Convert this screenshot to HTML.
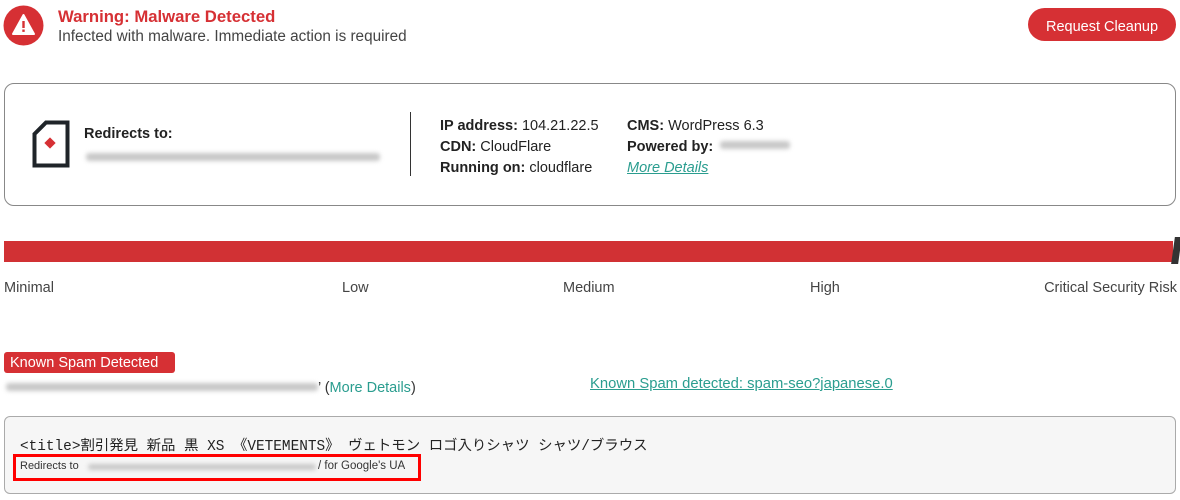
<!DOCTYPE html>
<html><head><meta charset="utf-8"><style>
*{margin:0;padding:0;box-sizing:border-box}
body{width:1180px;height:500px;background:#fff;font-family:"Liberation Sans","Noto Sans CJK JP",sans-serif;color:#333;position:relative;overflow:hidden;font-size:14.5px}
.a{position:absolute;white-space:nowrap}
.blur{background:#c8c8c8;filter:blur(2px);height:8px;border-radius:3px;position:absolute}
.teal{color:#2a9d8f}
</style></head><body>
<svg class="a" style="left:3px;top:5px" width="41" height="41" viewBox="0 0 41 41"><circle cx="20.5" cy="20.5" r="20" fill="#d63034"/><path d="M20.5 10 L31 29 H10 Z" fill="#fff" stroke="#fff" stroke-width="2" stroke-linejoin="round"/><rect x="19.3" y="16" width="2.4" height="7" fill="#d63034"/><rect x="19.3" y="24.5" width="2.4" height="2.4" fill="#d63034"/></svg>
<div class="a" style="left:58px;top:7px;font-size:16.7px;font-weight:bold;color:#d63034">Warning: Malware Detected</div>
<div class="a" style="left:58px;top:28px;font-size:15.3px;color:#444">Infected with malware. Immediate action is required</div>
<div class="a" style="left:1028px;top:8px;width:148px;height:33px;border-radius:17px;background:#d63034;color:#fff;font-size:14.5px;text-align:center;line-height:33px;padding-top:3px">Request Cleanup</div>

<div class="a" style="left:4px;top:83px;width:1172px;height:123px;border:1px solid #888;border-radius:10px"></div>
<svg class="a" style="left:32px;top:120px" width="38" height="48" viewBox="0 0 38 48"><path d="M2.5 14 L14 2.5 H35.5 V45.5 H2.5 Z" fill="none" stroke="#1f2429" stroke-width="4"/><rect x="14" y="19" width="8" height="8" fill="#d63034" transform="rotate(45 18 23)"/></svg>
<div class="a" style="left:84px;top:126px;font-weight:bold;color:#222">Redirects to:</div>
<div class="blur" style="left:86px;top:153px;width:294px"></div>
<div class="a" style="left:440px;top:116px;line-height:21px;color:#222"><b>IP address:</b> 104.21.22.5<br><b>CDN:</b> CloudFlare<br><b>Running on:</b> cloudflare</div>
<div class="a" style="left:410px;top:112px;width:1px;height:64px;background:#333"></div>
<div class="a" style="left:627px;top:116px;line-height:21px;color:#222"><b>CMS:</b> WordPress 6.3<br><b>Powered by:</b><br><i class="teal" style="text-decoration:underline">More Details</i></div>
<div class="blur" style="left:720px;top:141px;width:70px"></div>

<div class="a" style="left:4px;top:241px;width:1169px;height:21px;background:#d13134"></div>
<div class="a" style="left:1173px;top:237px;width:7px;height:27px;background:#333;transform:skewX(-8deg)"></div>
<div class="a" style="left:4px;top:280px;color:#444">Minimal</div>
<div class="a" style="left:342px;top:280px;color:#444">Low</div>
<div class="a" style="left:563px;top:280px;color:#444">Medium</div>
<div class="a" style="left:810px;top:280px;color:#444">High</div>
<div class="a" style="right:3px;top:280px;color:#444">Critical Security Risk</div>

<div class="a" style="left:4px;top:352px;width:171px;height:21px;background:#d63034;color:#fff;border-radius:3px;line-height:21px;padding-left:6px;padding-top:1px">Known Spam Detected</div>
<div class="blur" style="left:6px;top:383px;width:312px"></div>
<div class="a" style="left:318px;top:380px;color:#333">’ (<span class="teal">More Details</span>)</div>
<div class="a teal" style="left:590px;top:376px;text-decoration:underline;font-size:14.8px">Known Spam detected: spam-seo?japanese.0</div>

<div class="a" style="left:4px;top:416px;width:1172px;height:78px;background:#f6f6f6;border:1px solid #aaa;border-radius:6px"></div>
<div class="a" style="left:20px;top:434px;font-family:'Liberation Mono','Noto Sans CJK JP',monospace;font-size:14.4px;color:#222">&lt;title&gt;割引発見 新品 黒 XS 《VETEMENTS》 ヴェトモン ロゴ入りシャツ シャツ/ブラウス</div>
<div class="a" style="left:13px;top:454px;width:408px;height:27px;border:3px solid #f00"></div>
<div class="a" style="left:20px;top:460px;font-size:11px;color:#333">Redirects to</div>
<div class="blur" style="left:88px;top:464px;width:228px;height:6px"></div>
<div class="a" style="left:318px;top:460px;font-size:11.5px;color:#333">/ for Google's UA</div>
</body></html>
